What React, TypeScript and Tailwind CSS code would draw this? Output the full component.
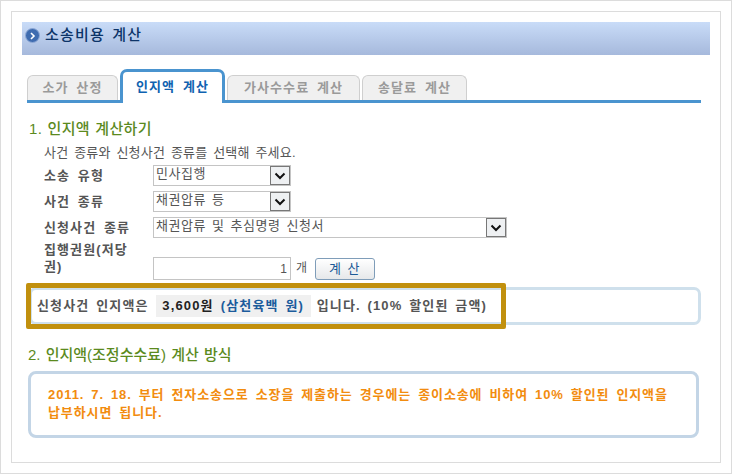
import React from 'react';

const KR = "font-['Liberation_Sans','Noto_Sans_CJK_KR',sans-serif]";

const SelectBox = ({ value, width }: { value: string; width: string }) => (
  <div className={`${width} h-[21px] border border-[#c4c4c4] flex bg-white`}>
    <span className="flex-1 pl-[2px] text-[13px] leading-[15px] tracking-[0.5px] [word-spacing:2px] text-[#555]">{value}</span>
    <span className="w-[20px] h-[19px] border border-[#777] bg-[#eef0f2] flex items-center justify-center">
      <svg width="12" height="8" viewBox="0 0 12 8">
        <path d="M1.5 1.5 L6 6 L10.5 1.5" fill="none" stroke="#111" strokeWidth="2" />
      </svg>
    </span>
  </div>
);

const Row = ({ label, children }: { label: React.ReactNode; children: React.ReactNode }) => (
  <div className="flex items-center">
    <span className="w-[109px] text-[13px] font-bold leading-[20px] tracking-[1.1px] [word-spacing:3px] text-[#555]">{label}</span>
    {children}
  </div>
);

const Tab = ({ label, width, active }: { label: string; width: string; active?: boolean }) =>
  active ? (
    <div className={`${width} h-[34px] -mb-[3px] pb-[1px] border-[3px] border-b-0 border-[#4a94cf] rounded-t-[7px] bg-white flex items-center justify-center text-[13px] font-bold tracking-[1.1px] [word-spacing:3px] text-[#0f62b0] z-10`}>
      {label}
    </div>
  ) : (
    <div className={`${width} h-[25px] pb-[1px] border border-b-0 border-[#cfcfcf] rounded-t-[6px] bg-[#f0f0f0] flex items-center justify-center text-[13px] font-bold tracking-[1.1px] [word-spacing:3px] text-[#9a9a9a]`}>
      {label}
    </div>
  );

export default function App() {
  return (
    <div className={`${KR} w-[732px] h-[474px] bg-white border border-[#dcdcdc] p-[10px]`}>
      <div className="relative w-[710px] h-[452px] border border-[#dcdcdc] px-[10px] pt-[10px]">
        {/* 타이틀 */}
        <div className="w-[688px] h-[33px] bg-gradient-to-b from-[#c9dcf8] to-[#a6b9dc] flex items-center pl-[3px] pb-[6px] gap-[5px]">
          <span className="w-[15px] h-[15px] rounded-full bg-[#3f6cb0] border border-[#8fa9d6] flex items-center justify-center">
            <svg width="8" height="8" viewBox="0 0 8 8">
              <path d="M2 1 L5 4 L2 7" fill="none" stroke="#fff" strokeWidth="1.6" />
            </svg>
          </span>
          <span className="text-[15px] font-medium tracking-[1.2px] [word-spacing:2px] text-[#0c3468]">소송비용 계산</span>
        </div>

        {/* 탭 */}
        <div className="ml-[5px] mt-[14px] w-[674px] h-[31px] border-b-[3px] border-[#4a94cf] box-content flex items-end gap-[2px]">
          <Tab label="소가 산정" width="w-[91px]" />
          <Tab label="인지액 계산" width="w-[105px]" active />
          <Tab label="가사수수료 계산" width="w-[133px]" />
          <Tab label="송달료 계산" width="w-[105px]" />
        </div>

        <h2 className="ml-[7px] mt-[16px] text-[15px] leading-[20px] font-medium tracking-[0.3px] [word-spacing:1px] text-[#5b8a1e]">1. 인지액 계산하기</h2>

        <div className="ml-[22px] mt-[6px]">
          <p className="text-[13px] leading-[16px] tracking-[0.2px] [word-spacing:2px] text-[#555]">사건 종류와 신청사건 종류를 선택해 주세요.</p>
          <div className="mt-[4px] flex flex-col gap-[5px]">
            <Row label="소송 유형"><SelectBox value="민사집행" width="w-[138px]" /></Row>
            <Row label="사건 종류"><SelectBox value="채권압류 등" width="w-[138px]" /></Row>
            <Row label="신청사건 종류"><SelectBox value="채권압류 및 추심명령 신청서" width="w-[354px]" /></Row>
          </div>
          <div className="mt-[3px] flex items-start">
            <span className="w-[109px] text-[13px] font-bold leading-[17px] tracking-[1.1px] text-[#555]">집행권원(저당<br />권)</span>
            <div className="mt-[16px] w-[138px] h-[23px] border border-[#c4c4c4] bg-white flex items-center justify-end pr-[3px] text-[12px] text-[#555]">1</div>
            <span className="mt-[16px] ml-[5px] w-[19px] text-[12px] leading-[23px] text-[#555]">개</span>
            <button className="mt-[17px] w-[60px] h-[22px] border border-[#7f9db9] rounded-[3px] bg-gradient-to-b from-white to-[#e6e8ea] text-[13px] tracking-[1.5px] text-[#1d5a96]">계 산</button>
          </div>
        </div>

        {/* 결과 */}
        <div className="ml-[7px] mt-[7px] w-[672px] h-[38px] border-[3px] border-[#cfe0ec] rounded-[7px] bg-white flex items-center pl-[5px] text-[13px] font-bold tracking-[1.15px] [word-spacing:2px] text-[#555]">
          <span>신청사건 인지액은</span>
          <span className="ml-[7px] h-[22px] w-[155px] bg-[#f0f0f0] flex items-center justify-center">
            <span className="text-[#222]">3,600원</span>
            <span className="ml-[7px] text-[#1c5c9c]">(삼천육백 원)</span>
          </span>
          <span className="ml-[6px]">입니다. (10% 할인된 금액)</span>
        </div>
        {/* 강조 표시 */}
        <div className="absolute left-[14px] top-[271px] w-[480px] h-[46px] border-[5px] border-[#c1900e] rounded-[2px]" />

        <h2 className="ml-[6px] mt-[20px] text-[15px] leading-[20px] font-medium tracking-[0px] [word-spacing:1px] text-[#5b8a1e]">2. 인지액(조정수수료) 계산 방식</h2>

        <div className="ml-[6px] mt-[6px] w-[671px] h-[67px] border-[3px] border-[#c3d5e6] rounded-[8px] bg-white pl-[17px] pt-[12px] text-[13px] font-bold leading-[18px] tracking-[0.9px] [word-spacing:2.5px] text-[#f28c0f]">
          2011. 7. 18. 부터 전자소송으로 소장을 제출하는 경우에는 종이소송에 비하여 10% 할인된 인지액을<br />납부하시면 됩니다.
        </div>
      </div>
    </div>
  );
}
